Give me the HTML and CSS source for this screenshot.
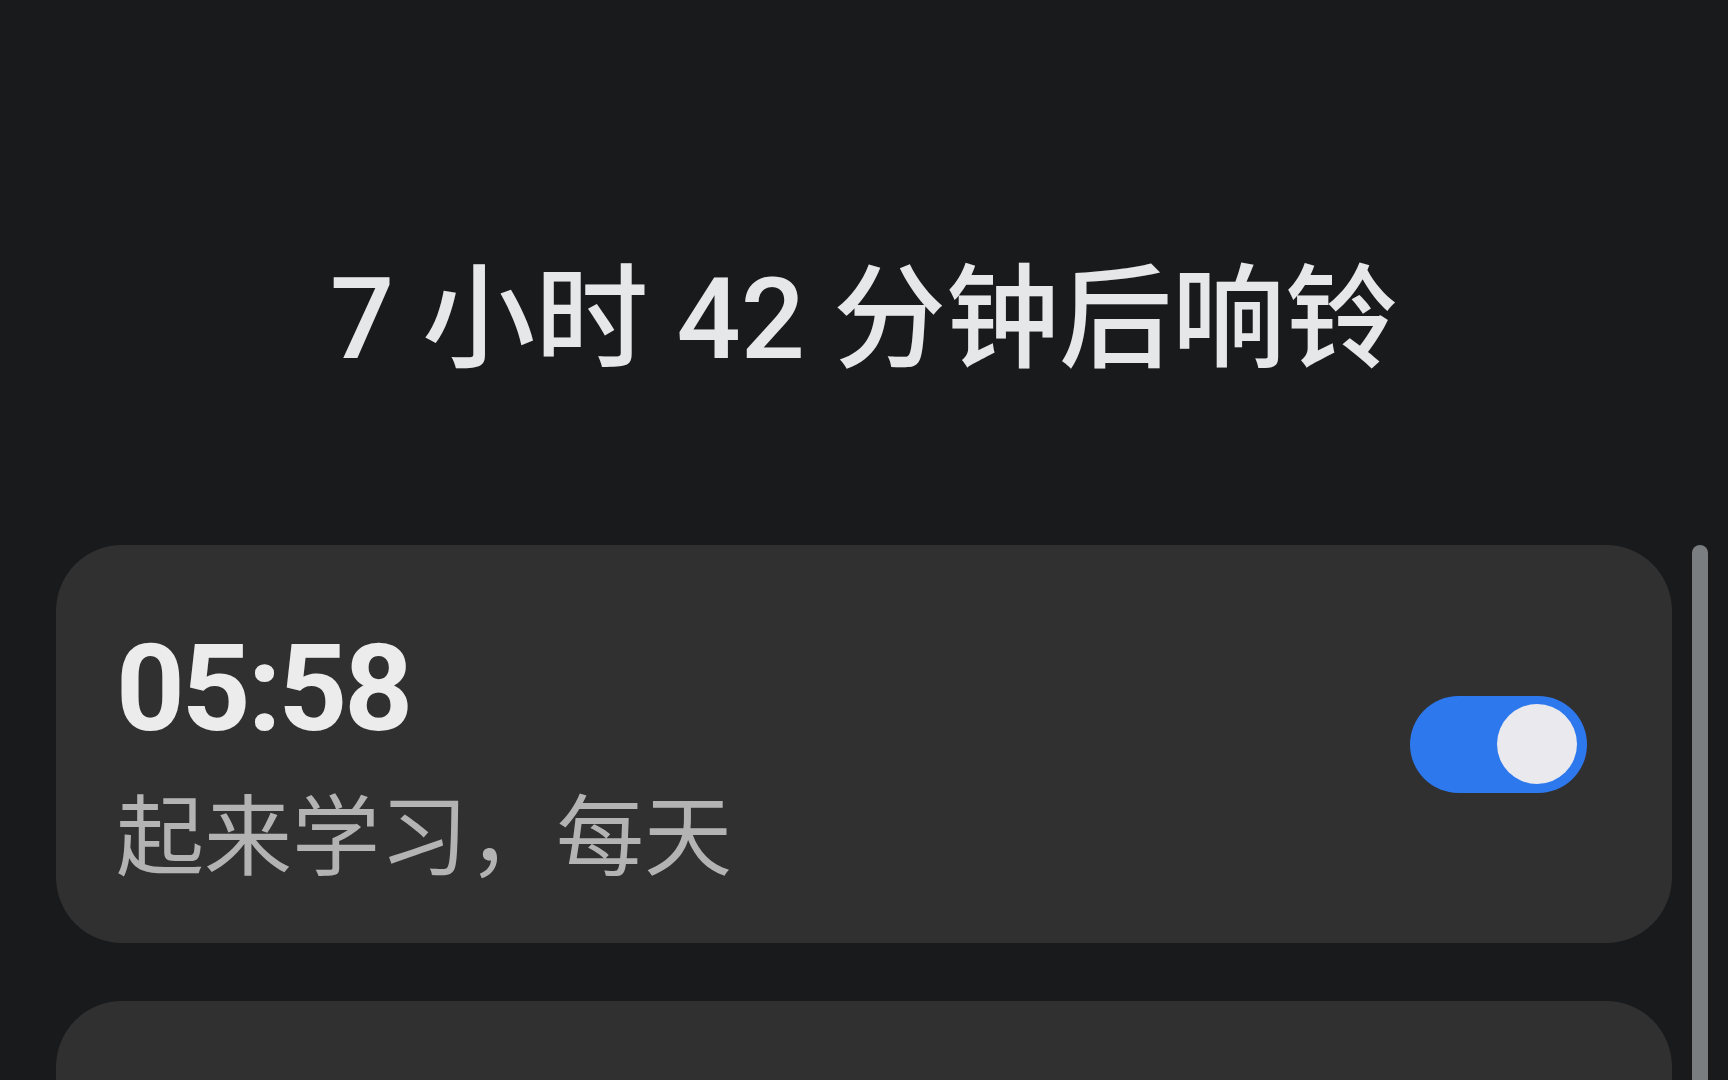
FILE: index.html
```html
<!DOCTYPE html>
<html lang="zh-CN">
<head>
<meta charset="utf-8">
<title>闹钟</title>
<link rel="stylesheet" href="styles.css">
</head>
<body>
<div class="screen">
  <header class="header">
    <h1 class="countdown">7 小时 42 分钟后响铃</h1>
  </header>
  <section class="list">
    <div class="card">
      <div class="info">
        <div class="time">05:58</div>
        <div class="label">起来学习，每天</div>
      </div>
      <div class="switch on"><span class="knob"></span></div>
    </div>
    <div class="card"></div>
  </section>
  <div class="scrollbar"></div>
</div>
</body>
</html>
```

FILE: styles.css
```css
html, body {
  margin: 0;
  padding: 0;
  height: 100%;
  background: #181a1c;
  overflow: hidden;
}

.screen {
  position: relative;
  height: 1080px;
  overflow: hidden;
  font-family: "Roboto", "Noto Sans CJK SC", sans-serif;
}

.header {
  height: 545px;
  box-sizing: border-box;
  padding-top: 251px;
  display: flex;
  justify-content: center;
}

.countdown {
  margin: 0;
  font-size: 113px;
  line-height: 138px;
  font-weight: 500;
  color: #e6e7e9;
  white-space: nowrap;
}

.list {
  padding: 0 56px;
  display: flex;
  flex-direction: column;
  gap: 58px;
}

.card {
  height: 398px;
  flex: none;
  box-sizing: border-box;
  background: #303030;
  border-radius: 66px;
  padding: 84px 85px 0 60px;
  display: flex;
  justify-content: space-between;
}

.info {
  display: flex;
  flex-direction: column;
}

.time {
  font-family: "Roboto", sans-serif;
  font-weight: 700;
  font-size: 120px;
  line-height: 120px;
  letter-spacing: -3px;
  color: #ececec;
}

.label {
  margin-top: 37px;
  font-family: "Noto Sans CJK SC", sans-serif;
  font-size: 88px;
  line-height: 88px;
  color: #b3b3b3;
}

.switch {
  align-self: center;
  margin-top: -84px;
  width: 177px;
  height: 97px;
  border-radius: 49px;
  background: #2e78ee;
  display: flex;
  align-items: center;
  justify-content: flex-end;
  padding-right: 10px;
  box-sizing: border-box;
}

.knob {
  width: 80px;
  height: 80px;
  border-radius: 50%;
  background: #eaeaee;
}

.scrollbar {
  position: absolute;
  left: 1692px;
  top: 545px;
  width: 16px;
  bottom: 0;
  border-radius: 8px 8px 0 0;
  background: #7b7e81;
}
```
